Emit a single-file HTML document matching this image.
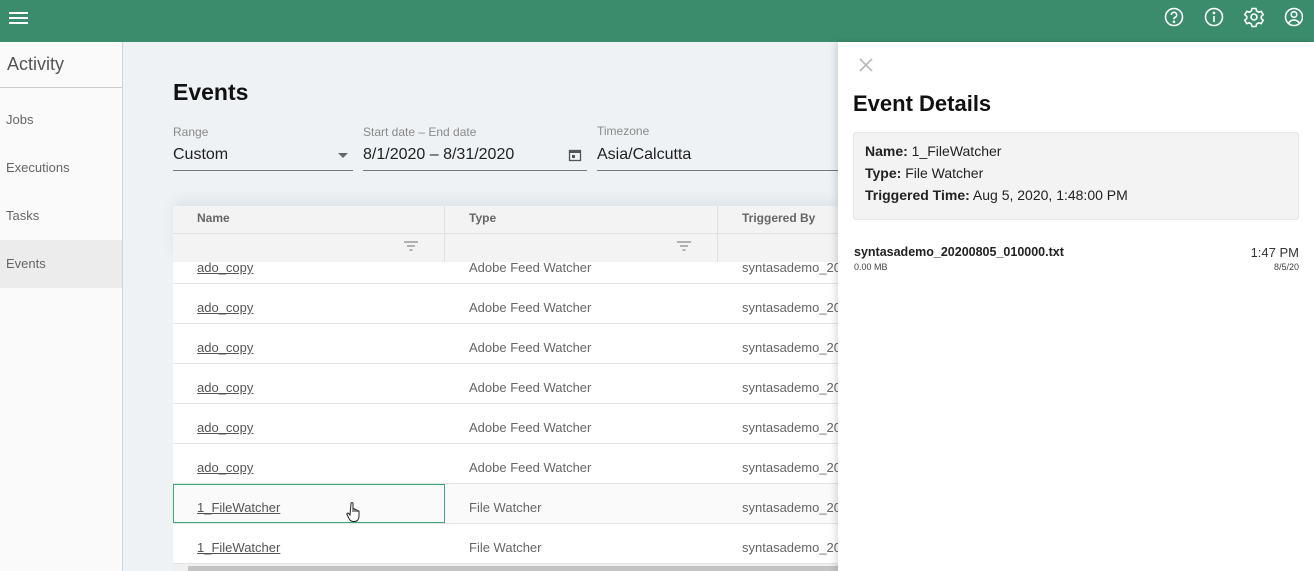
<!DOCTYPE html>
<html><head><style>
*{box-sizing:border-box;margin:0;padding:0}
body{width:1314px;height:571px;overflow:hidden;font-family:"Liberation Sans",Arial,sans-serif;background:#eef2f5;position:relative}
.abs{position:absolute}
#top{left:0;top:0;width:1314px;height:42px;background:#3a8c6c}
#side{left:0;top:42px;width:123px;height:529px;background:#fafafa;border-right:1px solid #d0d4d8}
.nav{position:absolute;left:6px;font-size:13px;color:#666}
.lbl{font-size:12px;color:#8a8a8a}
.val{font-size:16px;color:#222}
.ul{height:1px;background:#777}
.row{position:absolute;left:173px;width:665px;height:40px;background:#fff;border-bottom:1px solid #e4e4e4;font-size:13px;color:#666}
.row span{position:absolute;top:16px}
.row .n{left:24px;text-decoration:underline;color:#555}
.row .t{left:296px}
.row .b{left:569px;white-space:nowrap}
</style></head><body>
<div id="top" class="abs">
 <div class="abs" style="left:9px;top:12px;width:19px;height:2px;background:#fff"></div>
 <div class="abs" style="left:9px;top:17px;width:19px;height:2px;background:#fff"></div>
 <div class="abs" style="left:9px;top:22px;width:19px;height:2px;background:#fff"></div>
 <svg class="abs" style="left:1163px;top:7px" width="140" height="22" viewBox="0 0 140 22" fill="none" stroke="#fff" stroke-width="1.6">
  <circle cx="11" cy="10" r="8.5"/><path d="M8.3 8a2.7 2.7 0 1 1 3.6 2.5c-.8.4-.9.9-.9 1.8"/><circle cx="11" cy="14.8" r=".5" fill="#fff"/>
  <circle cx="51" cy="10" r="8.5"/><path d="M51 9v6"/><circle cx="51" cy="6" r=".6" fill="#fff"/>
  <circle cx="91" cy="10" r="3"/><path d="M89 1.5h4l.6 2.5 2.2 1.2 2.4-.9 2 3.4-1.9 1.7v2.2l1.9 1.7-2 3.4-2.4-.9-2.2 1.2-.6 2.5h-4l-.6-2.5-2.2-1.2-2.4.9-2-3.4 1.9-1.7v-2.2l-1.9-1.7 2-3.4 2.4.9 2.2-1.2z"/>
  <circle cx="131" cy="10" r="8.5"/><circle cx="131" cy="7.5" r="2.8"/><path d="M125.5 16.3c1.5-2.3 3.4-3.2 5.5-3.2s4 .9 5.5 3.2"/>
 </svg>
</div>
<div id="side" class="abs">
 <div class="abs" style="left:7px;top:12px;font-size:18px;color:#555">Activity</div>
 <div class="abs" style="left:0;top:45px;width:122px;height:1px;background:#ccc"></div>
 <div class="nav" style="top:70px">Jobs</div>
 <div class="nav" style="top:118px">Executions</div>
 <div class="nav" style="top:166px">Tasks</div>
 <div class="abs" style="left:0;top:198px;width:122px;height:48px;background:#ececec"></div>
 <div class="nav" style="top:214px">Events</div>
</div>
<div class="abs" style="left:173px;top:79px;font-size:23px;font-weight:bold;color:#111">Events</div>
<div class="abs lbl" style="left:173px;top:125px">Range</div>
<div class="abs val" style="left:173px;top:146px">Custom</div>
<div class="abs" style="left:338px;top:153px;border:5px solid transparent;border-top-color:#666;border-bottom:0"></div>
<div class="abs ul" style="left:173px;top:170px;width:180px"></div>
<div class="abs lbl" style="left:363px;top:125px">Start date – End date</div>
<div class="abs val" style="left:363px;top:146px">8/1/2020 – 8/31/2020</div>
<svg class="abs" style="left:568px;top:148px" width="14" height="14" viewBox="0 0 14 14"><rect x="1.5" y="2.5" width="11" height="10" fill="none" stroke="#555" stroke-width="1.3"/><rect x="1.5" y="2.5" width="11" height="2.5" fill="#555"/><rect x="4" y="7" width="3" height="3" fill="#555"/></svg>
<div class="abs ul" style="left:363px;top:170px;width:224px"></div>
<div class="abs lbl" style="left:597px;top:124px">Timezone</div>
<div class="abs val" style="left:597px;top:146px">Asia/Calcutta</div>
<div class="abs ul" style="left:597px;top:170px;width:241px"></div>
<div class="abs" style="left:173px;top:206px;width:665px;height:56px;background:#f3f3f3;box-shadow:0 -6px 12px rgba(0,0,0,.06)"></div>
<div class="abs" style="left:173px;top:233px;width:665px;height:1px;background:#e0e0e0"></div>
<div class="abs" style="left:444px;top:206px;width:1px;height:56px;background:#e0e0e0"></div>
<div class="abs" style="left:717px;top:206px;width:1px;height:56px;background:#e0e0e0"></div>
<div class="abs" style="left:197px;top:211px;font-size:12px;font-weight:bold;color:#666">Name</div>
<div class="abs" style="left:469px;top:211px;font-size:12px;font-weight:bold;color:#666">Type</div>
<div class="abs" style="left:742px;top:211px;font-size:12px;font-weight:bold;color:#666">Triggered By</div>
<svg class="abs" style="left:404px;top:241px" width="14" height="10"><path d="M0 1h14M3 5h8M5.5 9h3" stroke="#888" stroke-width="1.3"/></svg>
<svg class="abs" style="left:677px;top:241px" width="14" height="10"><path d="M0 1h14M3 5h8M5.5 9h3" stroke="#888" stroke-width="1.3"/></svg>
<div class="row" style="top:262px;height:22px"><span class="n" style="top:-2px">ado_copy</span><span class="t" style="top:-2px">Adobe Feed Watcher</span><span class="b" style="top:-2px">syntasademo_20</span></div>
<div class="row" style="top:284px"><span class="n">ado_copy</span><span class="t">Adobe Feed Watcher</span><span class="b">syntasademo_20</span></div>
<div class="row" style="top:324px"><span class="n">ado_copy</span><span class="t">Adobe Feed Watcher</span><span class="b">syntasademo_20</span></div>
<div class="row" style="top:364px"><span class="n">ado_copy</span><span class="t">Adobe Feed Watcher</span><span class="b">syntasademo_20</span></div>
<div class="row" style="top:404px"><span class="n">ado_copy</span><span class="t">Adobe Feed Watcher</span><span class="b">syntasademo_20</span></div>
<div class="row" style="top:444px"><span class="n">ado_copy</span><span class="t">Adobe Feed Watcher</span><span class="b">syntasademo_20</span></div>
<div class="row" style="top:484px;background:#fafafa"><span class="n">1_FileWatcher</span><span class="t">File Watcher</span><span class="b">syntasademo_20</span></div>
<div class="abs" style="left:173px;top:484px;width:272px;height:39px;border:1px solid #3aaa7a"></div>
<div class="row" style="top:524px"><span class="n">1_FileWatcher</span><span class="t">File Watcher</span><span class="b">syntasademo_20</span></div>
<div class="abs" style="left:173px;top:564px;width:665px;height:7px;background:#f0f0f0"></div>
<div class="abs" style="left:188px;top:566px;width:650px;height:5px;background:#c4c4c4"></div>
<svg class="abs" style="left:346px;top:501px" width="18" height="24" viewBox="0 0 18 24"><path d="M5 2.5c0-1.2 2-1.2 2 0V11V8.5c0-1 2-1 2 0v2.5-1.5c0-1 2-1 2 0V11v-.5c0-1 2-1 2 0v5c0 3-2 5-4.5 5h-1.5c-2 0-3-1-4-3l-2-4c-.5-1 .8-2 1.7-1l1.3 1.5z" fill="#fff" stroke="#222" stroke-width="1"/></svg>
<div class="abs" style="left:838px;top:42px;width:476px;height:529px;background:#fff;box-shadow:-3px 0 6px rgba(0,0,0,.12)">
 <svg class="abs" style="left:21px;top:16px" width="14" height="14"><path d="M1 1l12 12M13 1L1 13" stroke="#bbb" stroke-width="1.8"/></svg>
 <div class="abs" style="left:15px;top:49px;font-size:22px;font-weight:bold;color:#111">Event Details</div>
 <div class="abs" style="left:15px;top:90px;width:446px;height:88px;background:#f3f3f3;border:1px solid #e6e6e6;border-radius:3px;font-size:14px;color:#222;line-height:22px;padding:7px 11px">
  <div><b>Name:</b> 1_FileWatcher</div><div><b>Type:</b> File Watcher</div><div><b>Triggered Time:</b> Aug 5, 2020, 1:48:00 PM</div>
 </div>
 <div class="abs" style="left:16px;top:203px;font-size:12.5px;font-weight:bold;color:#222">syntasademo_20200805_010000.txt</div>
 <div class="abs" style="left:16px;top:220px;font-size:9px;color:#444">0.00 MB</div>
 <div class="abs" style="right:15px;top:203px;font-size:13px;color:#333">1:47 PM</div>
 <div class="abs" style="right:15px;top:220px;font-size:9px;color:#444">8/5/20</div>
</div>
</body></html>
